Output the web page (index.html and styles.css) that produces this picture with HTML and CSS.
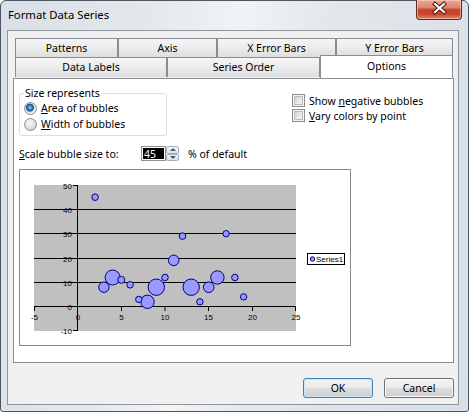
FILE: index.html
```html
<!DOCTYPE html>
<html>
<head>
    <meta charset="utf-8">
    <title>Format Data Series</title>
    <link rel="stylesheet" href="styles.css">
</head>
<body>
<div class="window">
    <div class="title-bar">
        <div class="title">Format Data Series</div>
        <div class="close-button" title="Close">
            <svg width="46" height="20" viewBox="0 0 46 20">
                <path d="M19 5 L28 13 M28 5 L19 13" stroke="#4a1a12" stroke-width="4.2" stroke-linecap="square" fill="none"/>
                <path d="M19 5 L28 13 M28 5 L19 13" stroke="#ffffff" stroke-width="2.2" stroke-linecap="square" fill="none"/>
            </svg>
        </div>
    </div>
    <div class="client">
        <div class="tab-strip">
            <div class="tab-row back-row">
                <div class="tab tab-patterns">Patterns</div>
                <div class="tab tab-axis">Axis</div>
                <div class="tab tab-x-error">X Error Bars</div>
                <div class="tab tab-y-error">Y Error Bars</div>
            </div>
            <div class="tab-row front-row">
                <div class="tab tab-labels">Data Labels</div>
                <div class="tab tab-order">Series Order</div>
                <div class="tab tab-options is-active">Options</div>
            </div>
        </div>
        <div class="tab-panel">
            <div class="options-top">
                <fieldset class="group-box">
                    <legend>Size represents</legend>
                    <label class="radio-item"><span class="radio is-checked"></span><span><u>A</u>rea of bubbles</span></label>
                    <label class="radio-item"><span class="radio"></span><span><u>W</u>idth of bubbles</span></label>
                </fieldset>
                <div class="check-list">
                    <label class="check-item"><span class="check"></span><span>Show <u>n</u>egative bubbles</span></label>
                    <label class="check-item"><span class="check"></span><span><u>V</u>ary colors by point</span></label>
                </div>
            </div>
            <div class="scale-row">
                <span class="scale-label"><u>S</u>cale bubble size to:</span>
                <div class="spin-box">
                    <div class="spin-field"><span class="spin-value">45</span></div>
                    <div class="spin-buttons">
                        <div class="spin-button spin-up"></div>
                        <div class="spin-button spin-down"></div>
                    </div>
                </div>
                <span class="scale-unit">% of default</span>
            </div>
            <div class="chart-preview">
                <svg width="330" height="175" viewBox="0 0 330 175">
                    <rect x="14" y="15" width="262" height="146" fill="#c0c0c0"/>
                    <g stroke="#000" stroke-width="1">
                        <line x1="14" y1="39.5" x2="276" y2="39.5"/>
                        <line x1="14" y1="63.5" x2="276" y2="63.5"/>
                        <line x1="14" y1="88.5" x2="276" y2="88.5"/>
                        <line x1="14" y1="112.5" x2="276" y2="112.5"/>
                        <line x1="14" y1="136.5" x2="276" y2="136.5"/>
                        <line x1="57.5" y1="15" x2="57.5" y2="161"/>
                        <line x1="53" y1="15.5" x2="57.5" y2="15.5"/>
                        <line x1="53" y1="39.5" x2="57.5" y2="39.5"/>
                        <line x1="53" y1="63.5" x2="57.5" y2="63.5"/>
                        <line x1="53" y1="88.5" x2="57.5" y2="88.5"/>
                        <line x1="53" y1="112.5" x2="57.5" y2="112.5"/>
                        <line x1="53" y1="136.5" x2="57.5" y2="136.5"/>
                        <line x1="53" y1="160.5" x2="57.5" y2="160.5"/>
                        <line x1="14.5" y1="136.5" x2="14.5" y2="141"/>
                        <line x1="57.5" y1="136.5" x2="57.5" y2="141"/>
                        <line x1="101.5" y1="136.5" x2="101.5" y2="141"/>
                        <line x1="145" y1="136.5" x2="145" y2="141"/>
                        <line x1="188.5" y1="136.5" x2="188.5" y2="141"/>
                        <line x1="232.5" y1="136.5" x2="232.5" y2="141"/>
                        <line x1="275.5" y1="136.5" x2="275.5" y2="141"/>
                    </g>
                    <g class="axis-text" text-anchor="end">
                        <text x="52" y="18.5">50</text>
                        <text x="52" y="42.5">40</text>
                        <text x="52" y="66.5">30</text>
                        <text x="52" y="91.5">20</text>
                        <text x="52" y="115.5">10</text>
                        <text x="52" y="139.5">0</text>
                        <text x="52" y="163.5">-10</text>
                    </g>
                    <g class="axis-text" text-anchor="middle">
                        <text x="14.5" y="150">-5</text>
                        <text x="58" y="150">0</text>
                        <text x="101.5" y="150">5</text>
                        <text x="145" y="150">10</text>
                        <text x="188.5" y="150">15</text>
                        <text x="232.5" y="150">20</text>
                        <text x="276" y="150">25</text>
                    </g>
                    <g fill="#9999ff" stroke="#000080" stroke-width="1">
                        <circle cx="136.3" cy="117.2" r="8.2"/>
                        <circle cx="171.2" cy="117.2" r="8.2"/>
                        <circle cx="92.6" cy="107.5" r="7.5"/>
                        <circle cx="127.5" cy="131.8" r="6.7"/>
                        <circle cx="197.4" cy="107.5" r="6.7"/>
                        <circle cx="153.7" cy="90.4" r="5.3"/>
                        <circle cx="188.7" cy="117.2" r="5.3"/>
                        <circle cx="83.9" cy="117.2" r="5.2"/>
                        <circle cx="101.3" cy="109.9" r="3.5"/>
                        <circle cx="75.1" cy="27.2" r="3.3"/>
                        <circle cx="110.1" cy="114.8" r="3.3"/>
                        <circle cx="145" cy="107.5" r="3.3"/>
                        <circle cx="162.5" cy="66.1" r="3.3"/>
                        <circle cx="214.9" cy="107.5" r="3.3"/>
                        <circle cx="118.8" cy="129.4" r="3.2"/>
                        <circle cx="179.9" cy="131.8" r="3.2"/>
                        <circle cx="206.1" cy="63.7" r="3.2"/>
                        <circle cx="223.6" cy="126.9" r="3.2"/>
                    </g>
                    <rect x="287.5" y="83.5" width="37" height="11" fill="#fff" stroke="#000"/>
                    <circle cx="292.5" cy="89" r="2.2" fill="#9999ff" stroke="#000080"/>
                    <text class="axis-text" x="296" y="92">Series1</text>
                </svg>
            </div>
        </div>
        <div class="button-row">
            <div class="button is-default">OK</div>
            <div class="button">Cancel</div>
        </div>
    </div>
</div>
</body>
</html>
```

FILE: styles.css
```css
* {
    box-sizing: border-box;
}

body {
    margin: 0;
    font-family: "Noto Sans", "Open Sans", sans-serif;
    font-size: 10.5px;
    color: #000;
}

.window {
    width: 469px;
    height: 412px;
    border: 1px solid #4d5661;
    border-radius: 6px 6px 3px 3px;
    padding: 0 9px 6px 6px;
    display: flex;
    flex-direction: column;
    background: linear-gradient(100deg, #d9dfe6 0%, #e4e8ec 28%, #f1f3f5 45%, #e2e7eb 62%, #d8dfe6 100%);
}

.title-bar {
    height: 29px;
    margin: 0 -8px 0 -6px;
    display: flex;
    justify-content: space-between;
    align-items: flex-start;
}

.title {
    padding: 7px 0 0 7px;
    font-size: 11.3px;
    line-height: 14px;
}

.close-button {
    width: 46px;
    height: 20px;
    margin: -1px 5px 0 0;
    border: 1px solid #5a2f28;
    border-top: 0;
    border-radius: 0 0 4px 4px;
    background: linear-gradient(#e9aa9c 0%, #dc8570 40%, #c6432b 52%, #c9472d 75%, #e08a6c 100%);
    box-shadow: inset 0 0 0 1px rgba(255, 220, 210, 0.5);
    overflow: hidden;
}

.close-button svg {
    display: block;
    margin: -1px 0 0 -1px;
}

.client {
    height: 375px;
    border: 1px solid #8e959c;
    background: #f0f0f0;
    padding-top: 7px;
    display: flex;
    flex-direction: column;
}

.tab-strip {
    margin: 0 5px 0 7px;
}

.tab-row {
    display: flex;
}

.tab {
    border: 1px solid #898c95;
    border-bottom: 0;
    background: linear-gradient(#f5f5f5, #ebebeb 50%, #dedede);
    text-align: center;
}

.back-row .tab {
    height: 19px;
    line-height: 18px;
}

.front-row .tab {
    height: 20px;
    line-height: 19px;
}

.tab-patterns { width: 103px; }
.tab-axis { width: 99px; }
.tab-x-error { width: 119px; }
.tab-y-error { width: 117px; }
.tab-labels { width: 152px; }
.tab-order { width: 153px; }
.tab-options { width: 133px; }

.front-row .tab.is-active {
    height: 23px;
    margin-top: -2px;
    line-height: 20px;
    background: #fff;
    position: relative;
    z-index: 1;
}

.tab-panel {
    height: 285px;
    margin: 0 4px 0 5px;
    border: 1px solid #898c95;
    background: #fff;
}

.options-top {
    display: flex;
    align-items: flex-start;
}

.group-box {
    width: 148px;
    margin: 7px 0 0 5px;
    padding: 0 5px 3px 4px;
    border: 1px solid #d5dfe5;
    border-radius: 3px;
}

.group-box legend {
    padding: 0 1px;
    line-height: 14px;
}

.radio-item,
.check-item {
    display: flex;
    align-items: center;
}

.radio-item {
    height: 16px;
}

.check-item {
    height: 15px;
}

.radio {
    width: 13px;
    height: 13px;
    margin-right: 4px;
    border: 1px solid #8e8f8f;
    border-radius: 50%;
    background: radial-gradient(circle at 40% 35%, #f7f7f7 0, #e6e6e6 4px, #cfd1d3 7px);
}

.radio.is-checked {
    background: radial-gradient(circle at 45% 42%, #a8dcf7 0, #3f93d3 1.6px, #1b4f8c 3.6px, #d9e1e8 4.4px, #eef1f4 6px);
}

.check-list {
    margin: 14px 0 0 125px;
}

.check {
    width: 13px;
    height: 13px;
    margin-right: 4px;
    border: 1px solid #8e8f8f;
    background: linear-gradient(135deg, #c9ced3, #eeeeee 70%, #f7f7f7);
    box-shadow: inset 0 0 0 1px #f4f4f4, inset 0 0 0 2px #b9bdc2;
}

.scale-row {
    height: 15px;
    margin: 10px 0 0 5px;
    display: flex;
    align-items: center;
}

.scale-label {
    width: 122px;
}

.spin-box {
    display: flex;
    height: 15px;
}

.spin-field {
    width: 25px;
    height: 15px;
    border: 1px solid #8d9094;
    padding: 1px;
    background: #fff;
}

.spin-value {
    display: block;
    height: 100%;
    padding-left: 1px;
    background: #000;
    color: #fff;
    line-height: 12px;
}

.spin-buttons {
    width: 13px;
    display: flex;
    flex-direction: column;
}

.spin-button {
    height: 50%;
    border: 1px solid #a7b0ba;
    border-radius: 2px;
    background: linear-gradient(#f3f6f9, #dce3ea);
    display: flex;
    align-items: center;
    justify-content: center;
}

.spin-up::after {
    content: "";
    border-left: 3px solid transparent;
    border-right: 3px solid transparent;
    border-bottom: 3px solid #4a5866;
}

.spin-down::after {
    content: "";
    border-left: 3px solid transparent;
    border-right: 3px solid transparent;
    border-top: 3px solid #4a5866;
}

.scale-unit {
    margin-left: 9px;
}

.chart-preview {
    width: 332px;
    height: 177px;
    margin: 8px 0 0 5px;
    border: 1px solid #8a8a8a;
    background: #fff;
}

.chart-preview svg {
    display: block;
}

.axis-text {
    font-family: "Liberation Sans", Arial, sans-serif;
    font-size: 8px;
    fill: #000;
}

.button-row {
    margin: 15px 4px 0 0;
    display: flex;
    justify-content: flex-end;
    gap: 11px;
}

.button {
    width: 70px;
    height: 20px;
    border: 1px solid #707070;
    border-radius: 3px;
    background: linear-gradient(#f2f2f2 0%, #ebebeb 50%, #dddddd 50%, #cfcfcf 100%);
    box-shadow: inset 0 0 0 1px #fbfbfb;
    text-align: center;
    line-height: 18px;
}

.button.is-default {
    border-color: #3c7fb1;
    box-shadow: inset 0 0 0 1px #cde8f8;
}
```
